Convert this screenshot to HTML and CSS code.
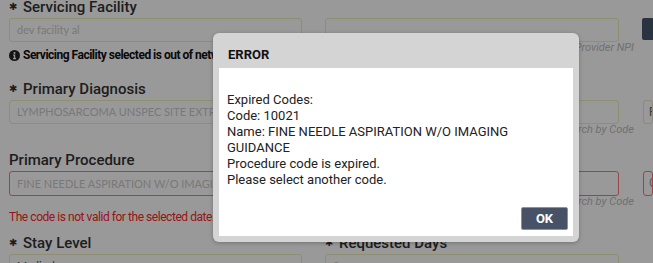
FILE: index.html
```html
<!DOCTYPE html>
<html>
<head>
<meta charset="utf-8">
<link rel="stylesheet" href="styles.css">
</head>
<body>
<div class="page">
  <div class="row r1">
    <div class="field">
      <div class="label"><span class="req">✱</span>Servicing Facility</div>
      <div class="input">dev facility al</div>
      <div class="info"><svg class="info-icon" viewBox="0 0 12 12" width="11" height="11"><circle cx="6" cy="6" r="6" fill="#222"/><circle cx="6" cy="3.2" r="1.1" fill="#fff"/><path d="M4.6 5h2.2v3.8h0.9v1.2H4.4V8.8h0.9V6.2h-0.7z" fill="#fff"/></svg>Servicing Facility selected is out of network</div>
    </div>
    <div class="field">
      <div class="label"></div>
      <div class="input"></div>
      <div class="helper helper-right">Search by Provider NPI</div>
    </div>
    <div class="side">
      <div class="label"></div>
      <div class="btn-dark">Search</div>
    </div>
  </div>

  <div class="row r2">
    <div class="field">
      <div class="label"><span class="req">✱</span>Primary Diagnosis</div>
      <div class="input">LYMPHOSARCOMA UNSPEC SITE EXTRANODAL AND SOLID ORGAN SITES</div>
      <div class="helper helper-left">Search by Code</div>
    </div>
    <div class="field">
      <div class="label"></div>
      <div class="input"></div>
      <div class="helper helper-right">Search by Code</div>
    </div>
    <div class="side">
      <div class="label"></div>
      <div class="btn-light">Find</div>
    </div>
  </div>

  <div class="row r3">
    <div class="field">
      <div class="label">Primary Procedure</div>
      <div class="input input-error">FINE NEEDLE ASPIRATION W/O IMAGING GUIDANCE</div>
      <div class="helper helper-left">Search by Code</div>
      <div class="error-text">The code is not valid for the selected date.</div>
    </div>
    <div class="field">
      <div class="label"></div>
      <div class="input input-error"></div>
      <div class="helper helper-right">Search by Code</div>
    </div>
    <div class="side">
      <div class="label"></div>
      <div class="btn-light btn-error">Clear</div>
    </div>
  </div>

  <div class="row r4">
    <div class="field">
      <div class="label"><span class="req">✱</span>Stay Level</div>
      <div class="input select">Medical<span class="clear">✖</span></div>
    </div>
    <div class="field">
      <div class="label"><span class="req">✱</span>Requested Days</div>
      <div class="input">0</div>
    </div>
    <div class="side"></div>
  </div>
</div>

<div class="overlay"></div>

<div class="modal">
  <div class="modal-header">ERROR</div>
  <div class="modal-body">
    <div class="message"><br>Expired Codes:<br>Code: 10021<br>Name: FINE NEEDLE ASPIRATION W/O IMAGING GUIDANCE<br>Procedure code is expired.<br>Please select another code.</div>
    <div class="modal-footer"><button class="ok">OK</button></div>
  </div>
</div>
</body>
</html>
```
FILE: styles.css
```css
html, body {
  margin: 0;
  padding: 0;
}
body {
  width: 653px;
  height: 263px;
  overflow: hidden;
  background: #fff;
  font-family: Roboto, "Liberation Sans", sans-serif;
  color: #333;
  position: relative;
}
.page {
  padding-left: 9px;
  margin-top: -2px;
}
.row {
  display: grid;
  grid-template-columns: 293px 294px 1fr;
  column-gap: 23px;
}
.r2 { margin-top: 17px; }
.r3 { margin-top: 15px; }
.r4 { margin-top: 9px; }
.field, .side {
  display: flex;
  flex-direction: column;
  min-width: 0;
}
.label {
  height: 18px;
  line-height: 18px;
  font-size: 15px;
  font-weight: 500;
  color: #333;
  display: flex;
  align-items: center;
  white-space: nowrap;
}
.req {
  font-size: 10px;
  width: 8px;
  margin-right: 6px;
  font-family: "DejaVu Sans", sans-serif;
}
.input {
  box-sizing: border-box;
  margin-top: 2px;
  height: 24px;
  line-height: 22px;
  border: 1px solid #ededbc;
  border-radius: 3px;
  padding: 0 7px;
  font-family: Lato, sans-serif;
  font-size: 11px;
  color: #cacaca;
  white-space: nowrap;
  overflow: hidden;
  background: #fff;
}
.r3 .input { height: 25px; line-height: 23px; }
.input-error { border-color: #ff7474; }
.select {
  display: flex;
  justify-content: space-between;
  color: #555;
}
.clear {
  font-family: "DejaVu Sans", sans-serif;
  font-size: 9px;
  color: #333;
  margin-right: 11px;
}
.info {
  margin-top: 5px;
  height: 16px;
  line-height: 16px;
  font-family: Roboto, sans-serif;
  font-weight: 700;
  font-size: 12px;
  letter-spacing: -0.5px;
  color: #111;
  display: flex;
  align-items: center;
  white-space: nowrap;
}
.info-icon {
  margin-right: 3px;
  flex: none;
}
.helper {
  height: 12px;
  line-height: 12px;
  font-size: 11px;
  font-style: italic;
  color: #bbb;
  white-space: nowrap;
  text-align: right;
}
.helper-left { margin-right: 12px; }
.helper-right { margin-right: -15px; }
.error-text {
  margin-top: 1px;
  height: 16px;
  line-height: 16px;
  font-family: Roboto, sans-serif;
  font-size: 12px;
  letter-spacing: -0.45px;
  color: #ff2424;
  white-space: nowrap;
}
.btn-dark {
  margin-top: 2px;
  height: 22px;
  background: #46566b;
  border-radius: 2px;
  color: #fff;
  font-size: 12px;
  line-height: 22px;
  padding-left: 12px;
  overflow: hidden;
}
.btn-light {
  box-sizing: border-box;
  margin-top: 2px;
  margin-left: 1px;
  height: 24px;
  border: 1px solid #e6e6d0;
  border-radius: 3px;
  font-size: 12px;
  line-height: 22px;
  padding-left: 5px;
  color: #666;
  overflow: hidden;
  white-space: nowrap;
}
.r3 .btn-light { height: 25px; line-height: 23px; }
.btn-error { border-color: #ff7474; color: #999; }

.overlay {
  position: absolute;
  inset: 0;
  background: rgba(0, 0, 0, 0.4);
}
.modal {
  position: absolute;
  left: 213px;
  top: 33px;
  width: 366px;
  height: 209px;
  box-sizing: border-box;
  background: #d4d4d4;
  border-radius: 6px;
  box-shadow: 0 1px 4px rgba(0, 0, 0, 0.25);
  display: flex;
  flex-direction: column;
}
.modal-header {
  height: 35px;
  box-sizing: border-box;
  padding: 14px 15px 0;
  font-size: 13px;
  line-height: 16px;
  font-weight: 700;
  color: #111;
}
.modal-body {
  flex: 1;
  margin: 0 6px 6px;
  background: #fff;
  padding: 8px 5px 6px 8px;
  display: flex;
  flex-direction: column;
}
.message {
  font-size: 13px;
  line-height: 16px;
  color: #222;
}
.modal-footer {
  margin-top: auto;
  display: flex;
  justify-content: flex-end;
}
.ok {
  width: 47px;
  height: 23px;
  background: #475266;
  border: 1px solid #6d9fb0;
  border-radius: 2px;
  color: #fff;
  font-family: Roboto, sans-serif;
  font-weight: 700;
  font-size: 13px;
  padding: 0;
}
```
